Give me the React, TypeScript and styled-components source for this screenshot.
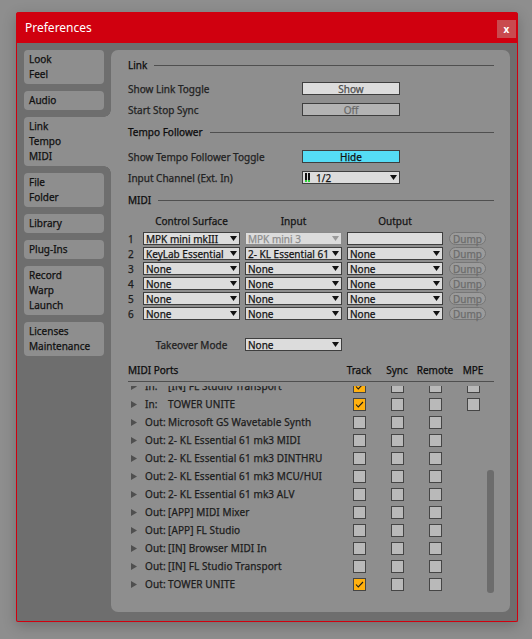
import { FC } from 'react';
import styled, { createGlobalStyle, css } from 'styled-components';

const GlobalStyle = createGlobalStyle`
    html, body {
        margin: 0;
        padding: 0;
        background: #8e8e8e;
    }
    body {
        font-family: 'Noto Sans', 'DejaVu Sans', sans-serif;
        font-size: 10px;
        color: #161616;
        -webkit-text-stroke: 0.25px currentColor;
    }
`;

const Page = styled.div`
    width: 532px;
    height: 639px;
    box-sizing: border-box;
    padding: 12px 0 0 16px;
    overflow: hidden;
`;

const Window = styled.div`
    width: 502px;
    height: 610px;
    box-sizing: border-box;
    display: flex;
    flex-direction: column;
    border: 1px solid #d0000f;
    border-top: none;
    border-radius: 3px 3px 2px 2px;
    background: #6e6e6e;
    box-shadow: 0 4px 14px rgba(0, 0, 0, 0.22);
`;

const TitleBar = styled.div`
    height: 31px;
    margin: 0 -1px;
    display: flex;
    align-items: flex-start;
    justify-content: space-between;
    padding: 0 2px 0 9px;
    background: #d0000f;
    border-radius: 3px 3px 0 0;
`;

const Title = styled.span`
    margin-top: 8px;
    font-size: 12px;
    line-height: 16px;
    color: #fff;
    -webkit-text-stroke: 0;
`;

const CloseButton = styled.div`
    margin-top: 8px;
    width: 19px;
    height: 18px;
    display: flex;
    align-items: center;
    justify-content: center;
    background: #c94a4f;
    color: #fff;
    font-size: 10px;
    font-weight: 700;
    -webkit-text-stroke: 0;
`;

const Body = styled.div`
    flex: 1;
    display: flex;
    gap: 7px;
    padding: 7px 7px 9px 7px;
    min-height: 0;
`;

const Sidebar = styled.div`
    width: 80px;
    flex: none;
    display: flex;
    flex-direction: column;
    gap: 7px;
`;

const Tab = styled.div<{ $active?: boolean }>`
    position: relative;
    padding: 2px 5px;
    line-height: 15px;
    background: #8e8e8e;
    border-radius: 4px;
    color: #101010;

    ${({ $active }) =>
        $active &&
        css`
            margin-right: -7px;
            border-radius: 4px 0 0 4px;

            &::before,
            &::after {
                content: '';
                position: absolute;
                right: 0;
                width: 7px;
                height: 7px;
            }
            &::before {
                top: -7px;
                background: radial-gradient(circle at 0 0, transparent 6.5px, #8e8e8e 7px);
            }
            &::after {
                bottom: -7px;
                background: radial-gradient(circle at 0 100%, transparent 6.5px, #8e8e8e 7px);
            }
        `}
`;

const Panel = styled.div`
    flex: 1;
    display: flex;
    flex-direction: column;
    padding: 8px 16px 0 17px;
    background: #8e8e8e;
    border-radius: 7px;
`;

const Section = styled.div`
    display: flex;
    flex-direction: column;
    & + & {
        margin-top: 8px;
    }
`;

const SectionHead = styled.div<{ $gapBelow?: number }>`
    height: 15px;
    line-height: 15px;
    display: flex;
    align-items: center;
    gap: 7px;
    margin-bottom: ${({ $gapBelow }) => $gapBelow ?? 9}px;
    color: #0c0c0c;

    &::after {
        content: '';
        flex: 1;
        height: 1px;
        background: #4f4f4f;
    }
`;

const SettingRow = styled.div`
    height: 15px;
    display: grid;
    grid-template-columns: 174px 98px;
    align-items: center;
    color: #222;
    & + & {
        margin-top: 6px;
    }
`;

const Toggle = styled.div<{ $tone: 'on' | 'off' | 'accent' }>`
    height: 13px;
    box-sizing: border-box;
    border: 1px solid #3e3e3e;
    display: flex;
    align-items: center;
    justify-content: center;
    ${({ $tone }) =>
        $tone === 'accent'
            ? css`
                  background: #55ddf6;
                  color: #111;
              `
            : $tone === 'off'
              ? css`
                    background: #b3b3b3;
                    color: #6a6a6a;
                `
              : css`
                    background: #dcdcdc;
                    color: #4e4e4e;
                `}
`;

const Select = styled.div<{ $disabled?: boolean }>`
    height: 13px;
    box-sizing: border-box;
    display: flex;
    align-items: center;
    gap: 2px;
    padding: 0 2px 0 2px;
    border: 1px solid ${({ $disabled }) => ($disabled ? '#8a8a8a' : '#3e3e3e')};
    background: #dcdcdc;
    color: ${({ $disabled }) => ($disabled ? '#8c8c8c' : '#141414')};
    white-space: nowrap;
`;

const SelectText = styled.span`
    flex: 1;
    min-width: 0;
`;

const Arrow: FC<{ $muted?: boolean }> = ({ $muted }) => (
    <svg width='7' height='5' viewBox='0 0 7 5' style={{ flex: 'none' }}>
        <path d='M0 0H7L3.5 5Z' fill={$muted ? '#9a9a9a' : '#111'} />
    </svg>
);

const MeterIcon = () => (
    <svg width='5' height='9' viewBox='0 0 5 9' style={{ flex: 'none', marginRight: 4 }}>
        <rect x='0' y='0' width='2' height='7' fill='#111' />
        <rect x='3' y='0' width='2' height='7' fill='#111' />
        <rect x='0' y='7' width='2' height='2' fill='#2fd43a' />
        <rect x='3' y='7' width='2' height='2' fill='#2fd43a' />
    </svg>
);

const SurfaceGrid = styled.div`
    display: grid;
    grid-template-columns: 10px 97px 97px 96px 38px;
    grid-template-rows: 17px repeat(6, 15px);
    column-gap: 5px;
    align-items: center;
    & > :nth-child(5n) {
        margin-left: 1px;
    }
`;

const ColHead = styled.div`
    align-self: start;
    text-align: center;
    line-height: 15px;
    color: #141414;
`;

const RowNum = styled.div`
    color: #1c1c1c;
`;

const DumpButton = styled.div`
    height: 13px;
    box-sizing: border-box;
    border: 1px solid #767676;
    border-radius: 7px;
    background: #9b9b9b;
    color: #6c6c6c;
    display: flex;
    align-items: center;
    justify-content: center;
`;

const TakeoverRow = styled.div`
    margin-top: 16px;
    height: 15px;
    display: grid;
    grid-template-columns: 10px 97px 97px;
    column-gap: 5px;
    align-items: center;
`;

const TakeoverLabel = styled.div`
    grid-column: 2;
    text-align: center;
    white-space: nowrap;
    color: #222;
`;

const PortsHead = styled.div`
    margin-top: 11px;
    padding: 0 2px 3px 0;
    border-bottom: 1px solid #4f4f4f;
    display: grid;
    grid-template-columns: 1fr repeat(4, 38px);
    line-height: 15px;
    color: #0c0c0c;
`;

const PortsHeadCell = styled.div`
    text-align: center;
`;

const PortList = styled.div`
    position: relative;
    margin-top: 4px;
    height: 208px;
    overflow: hidden;
`;

const PortRows = styled.div`
    margin-top: -9px;
`;

const PortRow = styled.div`
    height: 18px;
    display: grid;
    grid-template-columns: 17px 1fr repeat(4, 38px);
    align-items: center;
    padding-right: 2px;
    color: #1c1c1c;
`;

const Expander = styled.div`
    padding-left: 3px;
    display: flex;
    align-items: center;
`;

const PortName = styled.div`
    display: flex;
    white-space: nowrap;
    letter-spacing: 0.1px;
`;

const PortDir = styled.span`
    width: 23px;
    flex: none;
`;

const CheckCell = styled.div`
    display: flex;
    justify-content: center;
`;

const CheckBox = styled.div<{ $checked?: boolean }>`
    width: 13px;
    height: 13px;
    box-sizing: border-box;
    border: 1px solid #454545;
    background: ${({ $checked }) => ($checked ? '#ffb00f' : '#b9b9b9')};
    display: flex;
    align-items: center;
    justify-content: center;
`;

const ScrollThumb = styled.div`
    position: absolute;
    right: 0;
    top: 84px;
    width: 7px;
    height: 123px;
    border-radius: 3px;
    background: #6c6c6c;
`;

const Check: FC<{ checked?: boolean }> = ({ checked }) => (
    <CheckBox $checked={checked}>
        {checked && (
            <svg width='9' height='7' viewBox='0 0 9 7'>
                <path d='M1 3.5L3.3 6L8 1' fill='none' stroke='#1a1a1a' strokeWidth='1.1' />
            </svg>
        )}
    </CheckBox>
);

interface Surface {
    surface: string;
    input: string;
    output: string;
    inputDisabled?: boolean;
    outputEmpty?: boolean;
}

const SURFACES: Surface[] = [
    { surface: 'MPK mini mkIII', input: 'MPK mini 3', output: '', inputDisabled: true, outputEmpty: true },
    { surface: 'KeyLab Essential', input: '2- KL Essential 61', output: 'None' },
    { surface: 'None', input: 'None', output: 'None' },
    { surface: 'None', input: 'None', output: 'None' },
    { surface: 'None', input: 'None', output: 'None' },
    { surface: 'None', input: 'None', output: 'None' },
];

interface Port {
    dir: 'In:' | 'Out:';
    name: string;
    track?: boolean;
    mpe?: boolean;
}

const PORTS: Port[] = [
    { dir: 'In:', name: '[IN] FL Studio Transport', track: true, mpe: true },
    { dir: 'In:', name: 'TOWER UNITE', track: true, mpe: true },
    { dir: 'Out:', name: 'Microsoft GS Wavetable Synth' },
    { dir: 'Out:', name: '2- KL Essential 61 mk3 MIDI' },
    { dir: 'Out:', name: '2- KL Essential 61 mk3 DINTHRU' },
    { dir: 'Out:', name: '2- KL Essential 61 mk3 MCU/HUI' },
    { dir: 'Out:', name: '2- KL Essential 61 mk3 ALV' },
    { dir: 'Out:', name: '[APP] MIDI Mixer' },
    { dir: 'Out:', name: '[APP] FL Studio' },
    { dir: 'Out:', name: '[IN] Browser MIDI In' },
    { dir: 'Out:', name: '[IN] FL Studio Transport' },
    { dir: 'Out:', name: 'TOWER UNITE', track: true },
];

const TABS: { lines: string[]; active?: boolean }[] = [
    { lines: ['Look', 'Feel'] },
    { lines: ['Audio'] },
    { lines: ['Link', 'Tempo', 'MIDI'], active: true },
    { lines: ['File', 'Folder'] },
    { lines: ['Library'] },
    { lines: ['Plug-Ins'] },
    { lines: ['Record', 'Warp', 'Launch'] },
    { lines: ['Licenses', 'Maintenance'] },
];

const App: FC = () => (
    <Page>
        <GlobalStyle />
        <Window>
            <TitleBar>
                <Title>Preferences</Title>
                <CloseButton>x</CloseButton>
            </TitleBar>
            <Body>
                <Sidebar>
                    {TABS.map((tab) => (
                        <Tab key={tab.lines[0]} $active={tab.active}>
                            {tab.lines.map((line) => (
                                <div key={line}>{line}</div>
                            ))}
                        </Tab>
                    ))}
                </Sidebar>
                <Panel>
                    <Section>
                        <SectionHead $gapBelow={8}>Link</SectionHead>
                        <SettingRow>
                            <span>Show Link Toggle</span>
                            <Toggle $tone='on'>Show</Toggle>
                        </SettingRow>
                        <SettingRow>
                            <span>Start Stop Sync</span>
                            <Toggle $tone='off'>Off</Toggle>
                        </SettingRow>
                    </Section>
                    <Section>
                        <SectionHead>Tempo Follower</SectionHead>
                        <SettingRow>
                            <span>Show Tempo Follower Toggle</span>
                            <Toggle $tone='accent'>Hide</Toggle>
                        </SettingRow>
                        <SettingRow>
                            <span>Input Channel (Ext. In)</span>
                            <Select>
                                <MeterIcon />
                                <SelectText>1/2</SelectText>
                                <Arrow />
                            </Select>
                        </SettingRow>
                    </Section>
                    <Section>
                        <SectionHead $gapBelow={6}>MIDI</SectionHead>
                        <SurfaceGrid>
                            <span />
                            <ColHead>Control Surface</ColHead>
                            <ColHead>Input</ColHead>
                            <ColHead>Output</ColHead>
                            <span />
                            {SURFACES.map((row, i) => [
                                <RowNum key={`n${i}`}>{i + 1}</RowNum>,
                                <Select key={`s${i}`}>
                                    <SelectText>{row.surface}</SelectText>
                                    <Arrow />
                                </Select>,
                                <Select key={`i${i}`} $disabled={row.inputDisabled}>
                                    <SelectText>{row.input}</SelectText>
                                    <Arrow $muted={row.inputDisabled} />
                                </Select>,
                                <Select key={`o${i}`}>
                                    <SelectText>{row.output}</SelectText>
                                    {!row.outputEmpty && <Arrow />}
                                </Select>,
                                <DumpButton key={`d${i}`}>Dump</DumpButton>,
                            ])}
                        </SurfaceGrid>
                        <TakeoverRow>
                            <TakeoverLabel>Takeover Mode</TakeoverLabel>
                            <Select>
                                <SelectText>None</SelectText>
                                <Arrow />
                            </Select>
                        </TakeoverRow>
                    </Section>
                    <PortsHead>
                        <span>MIDI Ports</span>
                        <PortsHeadCell>Track</PortsHeadCell>
                        <PortsHeadCell>Sync</PortsHeadCell>
                        <PortsHeadCell>Remote</PortsHeadCell>
                        <PortsHeadCell>MPE</PortsHeadCell>
                    </PortsHead>
                    <PortList>
                        <PortRows>
                            {PORTS.map((port, i) => (
                                <PortRow key={i}>
                                    <Expander>
                                        <svg width='6' height='7' viewBox='0 0 6 7'>
                                            <path d='M0 0L6 3.5L0 7Z' fill='#4f4f4f' />
                                        </svg>
                                    </Expander>
                                    <PortName>
                                        <PortDir>{port.dir}</PortDir>
                                        <span>{port.name}</span>
                                    </PortName>
                                    <CheckCell>
                                        <Check checked={port.track} />
                                    </CheckCell>
                                    <CheckCell>
                                        <Check />
                                    </CheckCell>
                                    <CheckCell>
                                        <Check />
                                    </CheckCell>
                                    <CheckCell>{port.mpe && <Check />}</CheckCell>
                                </PortRow>
                            ))}
                        </PortRows>
                        <ScrollThumb />
                    </PortList>
                </Panel>
            </Body>
        </Window>
    </Page>
);

export default App;
